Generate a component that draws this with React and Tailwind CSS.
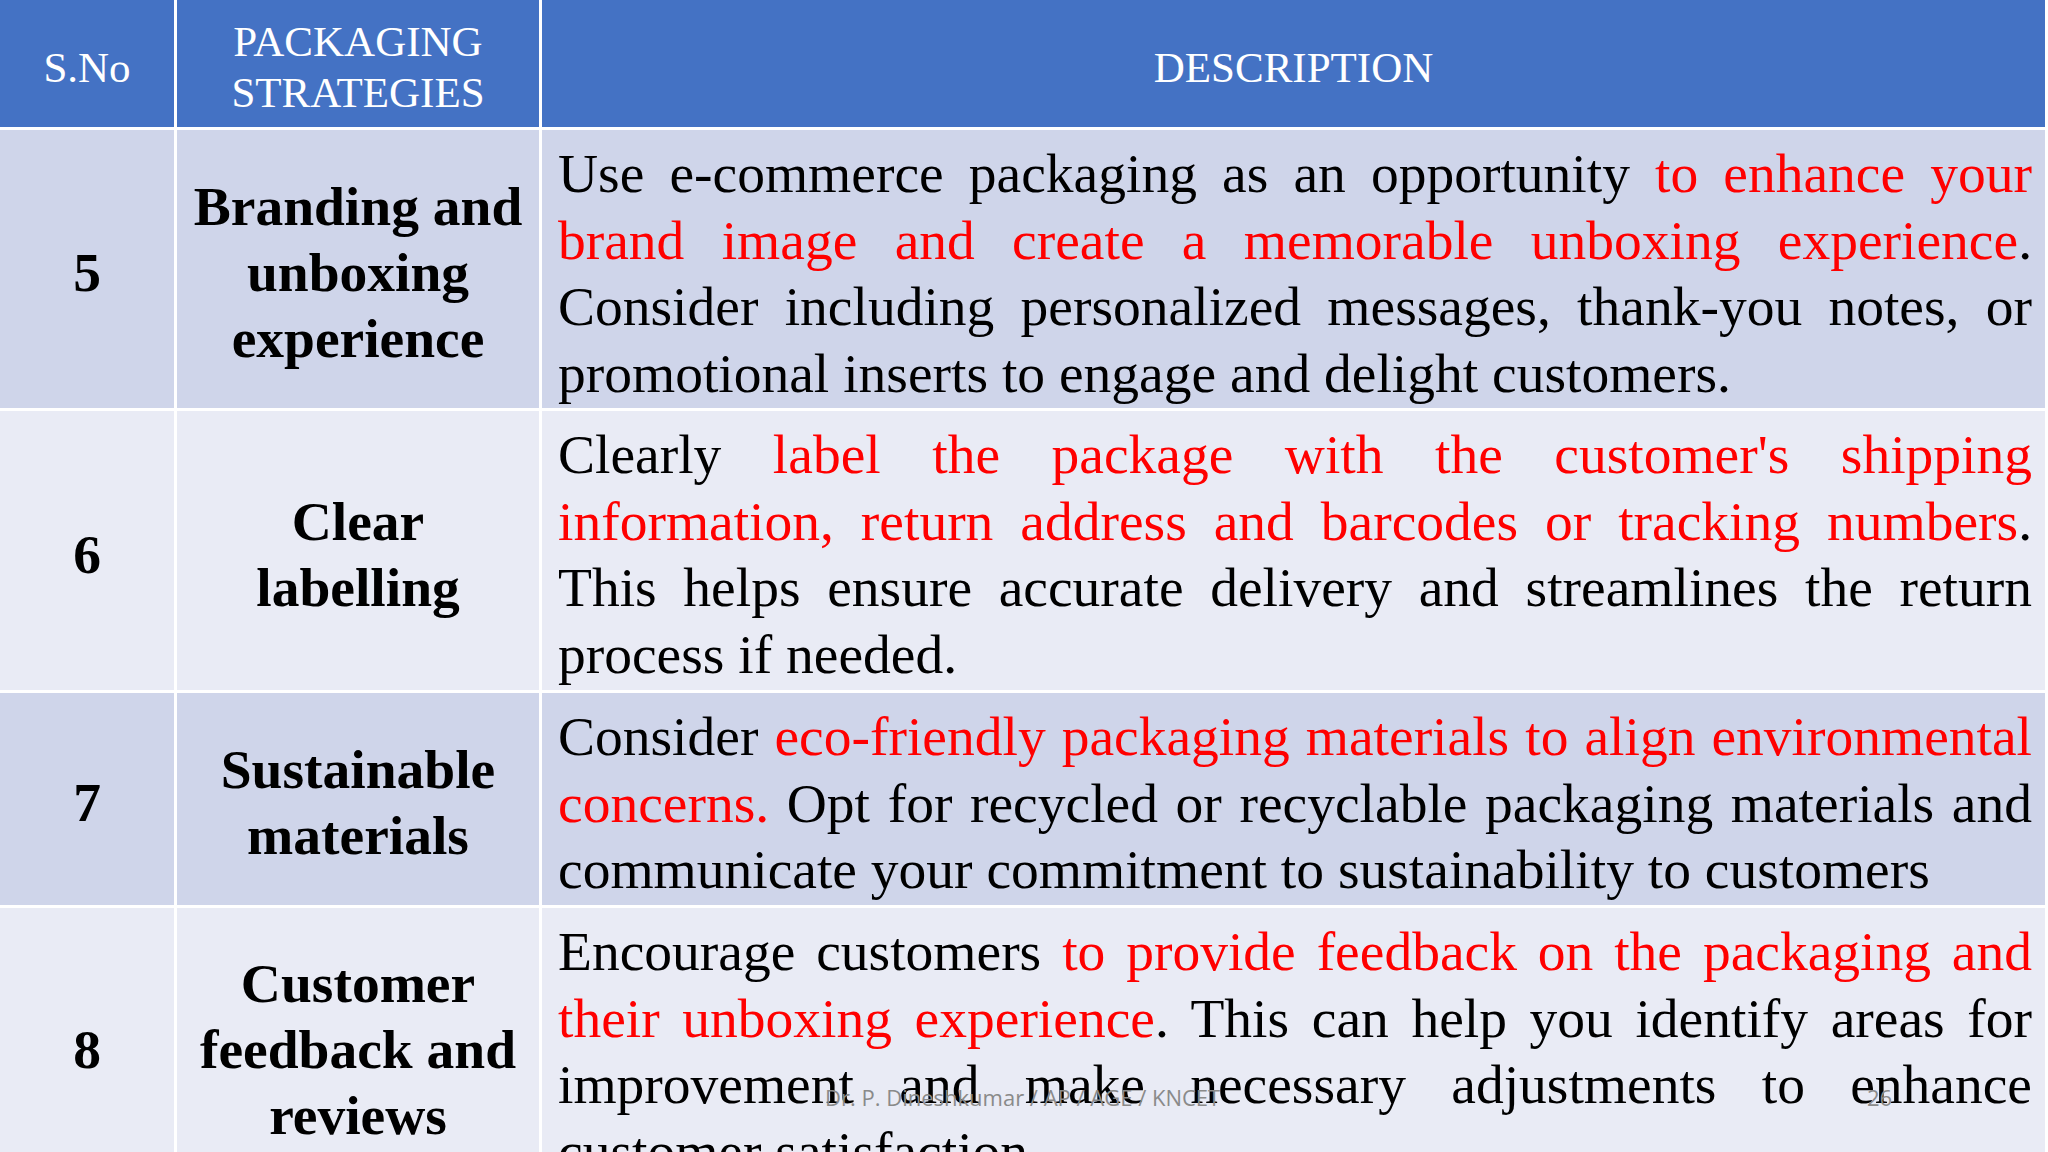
const RED = "text-[#ff0000]";

function Red({ children }) {
  return <span className={RED}>{children}</span>;
}

const rows = [
  {
    no: "5",
    title: "Branding and unboxing experience",
    bg: "bg-[#cfd5ea]",
    body: (
      <>
        Use e-commerce packaging as an opportunity{" "}
        <Red>to enhance your brand image and create a memorable unboxing experience</Red>. Consider
        including personalized messages, thank-you notes, or promotional inserts to engage and delight
        customers.
      </>
    ),
  },
  {
    no: "6",
    title: "Clear labelling",
    bg: "bg-[#e9ebf5]",
    body: (
      <>
        Clearly{" "}
        <Red>
          label the package with the customer's shipping information, return address and barcodes or
          tracking numbers
        </Red>
        . This helps ensure accurate delivery and streamlines the return process if needed.
      </>
    ),
  },
  {
    no: "7",
    title: "Sustainable materials",
    bg: "bg-[#cfd5ea]",
    body: (
      <>
        Consider <Red>eco-friendly packaging materials to align environmental concerns.</Red> Opt for
        recycled or recyclable packaging materials and communicate your commitment to sustainability to
        customers
      </>
    ),
  },
  {
    no: "8",
    title: "Customer feedback and reviews",
    bg: "bg-[#e9ebf5]",
    body: (
      <>
        Encourage customers <Red>to provide feedback on the packaging and their unboxing experience</Red>
        . This can help you identify areas for improvement and make necessary adjustments to enhance
        customer satisfaction.
      </>
    ),
  },
];

export default function App() {
  return (
    <div
      className="relative h-[1152px] w-[2048px] overflow-hidden bg-white"
      style={{ fontFamily: '"Liberation Serif", "Times New Roman", serif' }}
    >
      <div className="grid w-[2045px] grid-cols-[174px_362px_1fr] grid-rows-[127px_278px_279px_212px_276px] gap-[3px]">
        {/* header */}
        <div className="flex items-center justify-center bg-[#4472c4] pt-[8px] text-[43px] leading-[51px] text-white">
          S.No
        </div>
        <div className="flex items-center justify-center bg-[#4472c4] pt-[6px] text-center text-[43px] leading-[51px] text-white">
          PACKAGING
          <br />
          STRATEGIES
        </div>
        <div className="flex items-center justify-center bg-[#4472c4] pt-[8px] text-[43px] leading-[51px] text-white">
          DESCRIPTION
        </div>

        {rows.map((r) => (
          <Row key={r.no} {...r} />
        ))}
      </div>

      {/* slide footer */}
      <div
        className="absolute left-[825px] top-[1082px] text-[22px] leading-[30px] text-[#8a8a8a]"
        style={{ fontFamily: '"Open Sans", "Liberation Sans", sans-serif' }}
      >
        Dr. P. Dineshkumar / AP / AGE / KNCET
      </div>
      <div
        className="absolute left-[1867px] top-[1082px] text-[22px] leading-[30px] text-[#8a8a8a]"
        style={{ fontFamily: '"Open Sans", "Liberation Sans", sans-serif' }}
      >
        26
      </div>
    </div>
  );
}

function Row({ no, title, bg, body }) {
  return (
    <>
      <div className={`flex items-center justify-center ${bg} pt-[8px] text-[55.5px] font-bold leading-[66px] text-black`}>
        {no}
      </div>
      <div
        className={`flex items-center justify-center ${bg} px-[10px] pt-[8px] text-center text-[55.5px] font-bold leading-[66px] text-black`}
      >
        {title}
      </div>
      <div className={`${bg} pl-[16px] pr-[13px] pt-[11px] text-justify text-[55.5px] leading-[66.5px] text-black`}>
        {body}
      </div>
    </>
  );
}
